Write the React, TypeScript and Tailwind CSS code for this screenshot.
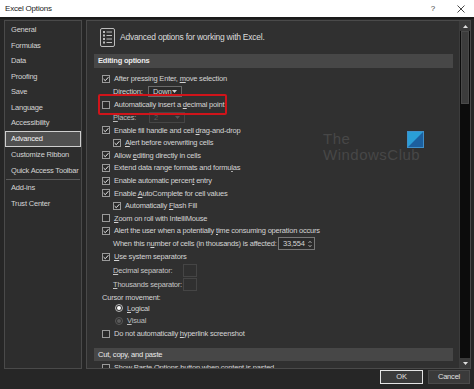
import type { ReactNode } from "react";

const NAV_TOP = [
  "General",
  "Formulas",
  "Data",
  "Proofing",
  "Save",
  "Language",
  "Accessibility",
];

function Check({ checked = true }: { checked?: boolean }) {
  return (
    <span className="flex h-[8px] w-[8px] shrink-0 items-center justify-center border border-[#9a9a9a] bg-[#2a2a2a]">
      {checked && (
        <svg width="6" height="6" viewBox="0 0 6 6">
          <path d="M0.6 3.1 L2.3 4.7 L5.4 1.2" fill="none" stroke="#e8e8e8" strokeWidth="1" />
        </svg>
      )}
    </span>
  );
}

function Radio({ on }: { on: boolean }) {
  return (
    <span
      className={`flex h-[8px] w-[8px] shrink-0 items-center justify-center rounded-full border ${
        on ? "border-[#bdbdbd] bg-[#2a2a2a]" : "border-[#5a5a5a] bg-[#2e2e2e]"
      }`}
    >
      <span className={`h-[4px] w-[4px] rounded-full ${on ? "bg-white" : "bg-[#5c5c5c]"}`} />
    </span>
  );
}

function CheckRow({
  h,
  indent,
  checked = true,
  children,
}: {
  h: string;
  indent?: boolean;
  checked?: boolean;
  children: ReactNode;
}) {
  return (
    <div className={`flex items-center gap-[4px] ${h} ${indent ? "pl-[19px]" : "pl-[8px]"}`}>
      <Check checked={checked} />
      <span className="whitespace-nowrap">{children}</span>
    </div>
  );
}

function DocIcon() {
  return (
    <svg width="15" height="19" viewBox="0 0 15 19">
      <rect x="0.5" y="0.5" width="14" height="18" rx="1.5" fill="none" stroke="#bdbdbd" />
      {[4, 7.5, 11, 14.5].map((y) => (
        <g key={y}>
          <rect x="3" y={y - 1} width="2" height="2" fill="#bdbdbd" />
          <line x1="6.5" y1={y} x2="12" y2={y} stroke="#bdbdbd" strokeWidth="1" />
        </g>
      ))}
    </svg>
  );
}

export default function App() {
  return (
    <div className="relative h-[389px] w-[474px] overflow-hidden bg-[#262626] font-['Liberation_Sans',Arial,sans-serif] text-[7.5px] tracking-[-0.2px] text-[#d4d4d4]">
      {/* title bar */}
      <div className="flex h-[19px] items-center border-b-[2px] border-[#1a1a1a] bg-white pl-[5px] pr-[9px] text-[8px] text-[#222]">
        <span className="flex-1 pt-[1px]">Excel Options</span>
        <span className="mr-[22px] text-[8px] text-[#444]">?</span>
        <svg width="8" height="8" viewBox="0 0 8 8">
          <path d="M0.5 0.5 L7.5 7.5 M7.5 0.5 L0.5 7.5" stroke="#333" strokeWidth="0.9" />
        </svg>
      </div>

      <div className="flex h-[350px] gap-[4px] pl-[4px] pr-[3px] pt-[1px]">
        {/* left nav */}
        <nav className="flex w-[78px] flex-col border border-[#4a4a4a] bg-[#2d2d2d] pt-[1px]">
          {NAV_TOP.map((item) => (
            <div key={item} className="flex h-[15.5px] items-center pl-[6px]">
              {item}
            </div>
          ))}
          <div className="flex h-[16px] items-center border border-[#cfcfcf] bg-[#505050] pl-[5px] text-[#f0f0f0]">
            Advanced
          </div>
          <div className="flex h-[16px] items-center pl-[6px]">Customize Ribbon</div>
          <div className="flex h-[16px] items-center pl-[6px]">Quick Access Toolbar</div>
          <div className="mx-[1px] h-px bg-[#5a5a5a]" />
          <div className="flex h-[16px] items-center pl-[6px]">Add-ins</div>
          <div className="flex h-[16px] items-center pl-[6px]">Trust Center</div>
        </nav>

        {/* content */}
        <section className="relative flex flex-1 overflow-hidden border border-[#4a4a4a] bg-[#303030]">
          <div className="flex-1 pl-[7px] pr-[6px]">
            <div className="flex h-[33px] items-center gap-[5px] pl-[6px]">
              <DocIcon />
              <span className="text-[8.5px] tracking-[-0.25px] text-[#dcdcdc]">
                Advanced options for working with Excel.
              </span>
            </div>
            <div className="flex h-[14px] items-center bg-[#474747] pl-[4px] font-bold text-[#ececec]">
              Editing options
            </div>
            <div className="pt-[4px]">
              <CheckRow h="h-[13px]">
                After pressing Enter, <u>m</u>ove selection
              </CheckRow>
              <div className="flex h-[13px] items-center pl-[19px]">
                <span className="w-[35px]">
                  <u>D</u>irection:
                </span>
                <span className="flex h-[11px] w-[34px] items-center justify-between border border-[#6a6a6a] bg-[#2a2a2a] px-[4px]">
                  Down
                  <svg width="5" height="3" viewBox="0 0 5 3">
                    <path d="M0 0 L5 0 L2.5 3 Z" fill="#d0d0d0" />
                  </svg>
                </span>
              </div>
              <CheckRow h="h-[13px]" checked={false}>
                Automatically insert a <u>d</u>ecimal point
              </CheckRow>
              <div className="flex h-[13px] items-center pl-[19px] text-[#bcbcbc]">
                <span className="w-[36px]">
                  <u>P</u>laces:
                </span>
                <span className="flex h-[11px] w-[36px] items-center justify-between border border-[#464646] px-[4px] text-[#5e5e5e]">
                  2
                  <svg width="5" height="3" viewBox="0 0 5 3">
                    <path d="M0 0 L5 0 L2.5 3 Z" fill="#555" />
                  </svg>
                </span>
              </div>
              <CheckRow h="h-[12.6px]">
                Enable fill handle and cell <u>d</u>rag-and-drop
              </CheckRow>
              <CheckRow h="h-[12.6px]" indent>
                <u>A</u>lert before overwriting cells
              </CheckRow>
              <CheckRow h="h-[12.6px]">
                Allow <u>e</u>diting directly in cells
              </CheckRow>
              <CheckRow h="h-[12.6px]">
                Extend data range formats and formu<u>l</u>as
              </CheckRow>
              <CheckRow h="h-[12.6px]">
                Enable automatic percen<u>t</u> entry
              </CheckRow>
              <CheckRow h="h-[12.6px]">
                Enable <u>A</u>utoComplete for cell values
              </CheckRow>
              <CheckRow h="h-[12.6px]" indent>
                Automatically <u>F</u>lash Fill
              </CheckRow>
              <CheckRow h="h-[12.6px]" checked={false}>
                <u>Z</u>oom on roll with IntelliMouse
              </CheckRow>
              <CheckRow h="h-[12.6px]">
                Alert the user when a potentially <u>t</u>ime consuming operation occurs
              </CheckRow>
              <div className="flex h-[12.6px] items-center pl-[19px]">
                <span className="w-[165px] whitespace-nowrap">
                  When this n<u>u</u>mber of cells (in thousands) is affected:
                </span>
                <span className="flex h-[13px] w-[37px] items-center justify-between border border-[#777] bg-[#2a2a2a] pl-[4px] pr-[2px]">
                  33,554
                  <svg width="4" height="8" viewBox="0 0 4 8">
                    <path d="M0.5 3 L2 1.2 L3.5 3 M0.5 5 L2 6.8 L3.5 5" fill="none" stroke="#bbb" strokeWidth="0.8" />
                  </svg>
                </span>
              </div>
              <CheckRow h="h-[14px]">
                <u>U</u>se system separators
              </CheckRow>
              <div className="flex h-[14px] items-center pl-[19px] text-[#c6c6c6]">
                <span className="w-[70px]">
                  <u>D</u>ecimal separator:
                </span>
                <span className="h-[13px] w-[14px] border border-[#454545]" />
              </div>
              <div className="flex h-[14px] items-center pl-[19px] text-[#c6c6c6]">
                <span className="w-[70px]">
                  <u>T</u>housands separator:
                </span>
                <span className="h-[13px] w-[14px] border border-[#454545]" />
              </div>
              <div className="flex h-[11px] items-center pl-[8px]">Cursor movement:</div>
              <div className="flex h-[11px] items-center gap-[4px] pl-[21px]">
                <Radio on />
                <span>
                  <u>L</u>ogical
                </span>
              </div>
              <div className="flex h-[14px] items-center gap-[4px] pl-[21px] text-[#bdbdbd]">
                <Radio on={false} />
                <span>
                  <u>V</u>isual
                </span>
              </div>
              <CheckRow h="h-[12px]" checked={false}>
                Do not automatically <u>h</u>yperlink screenshot
              </CheckRow>
            </div>
            <div className="mt-[8px] flex h-[13px] items-center bg-[#474747] pl-[4px] text-[#ececec]">
              Cut, copy, and paste
            </div>
            <CheckRow h="h-[14px]" checked={false}>
              Show Paste Options button when content is pasted
            </CheckRow>
          </div>

          {/* scrollbar */}
          <div className="flex w-[11px] flex-col border-l border-[#3c3c3c] bg-[#0c0c0c]">
            <div className="flex h-[10px] items-center justify-center bg-[#3a3a3a]">
              <svg width="5" height="3" viewBox="0 0 5 3">
                <path d="M0 3 L5 3 L2.5 0 Z" fill="#e0e0e0" />
              </svg>
            </div>
            <div className="mx-[1px] h-[73px] border border-[#4a4a4a] bg-[#3c3c3c]" />
            <div className="flex-1" />
            <div className="flex h-[10px] items-center justify-center bg-[#3a3a3a]">
              <svg width="5" height="3" viewBox="0 0 5 3">
                <path d="M0 0 L5 0 L2.5 3 Z" fill="#e0e0e0" />
              </svg>
            </div>
          </div>

          {/* highlight + watermark overlays */}
          <div className="absolute left-[11px] top-[73px] h-[21px] w-[129px] rounded-[2px] border-[2.5px] border-[#d0141a]" />
          <div className="absolute left-[236px] top-[110px] text-[15px] leading-[16px] tracking-[0.5px] text-[#474747]">
            <div>The</div>
            <div>WindowsClub</div>
          </div>
          <svg className="absolute left-[320px] top-[110px]" width="17" height="17" viewBox="0 0 17 17">
            <rect x="0.5" y="0.5" width="16" height="16" fill="#1c5f9e" stroke="#3f8fca" />
            <path d="M1 1 L16 1 L1 16 Z" fill="#2a9ed6" />
          </svg>
        </section>
      </div>

      {/* footer */}
      <div className="flex h-[20px] justify-end gap-[5px] pr-[4px] pt-[1px]">
        <button className="h-[14px] w-[43px] border-[1.5px] border-[#e4e4e4] bg-[#3a3a3a] text-[#e0e0e0]">
          OK
        </button>
        <button className="h-[14px] w-[42px] border border-[#4a4a4a] bg-[#3a3a3a] text-[#e0e0e0]">
          Cancel
        </button>
      </div>
    </div>
  );
}
